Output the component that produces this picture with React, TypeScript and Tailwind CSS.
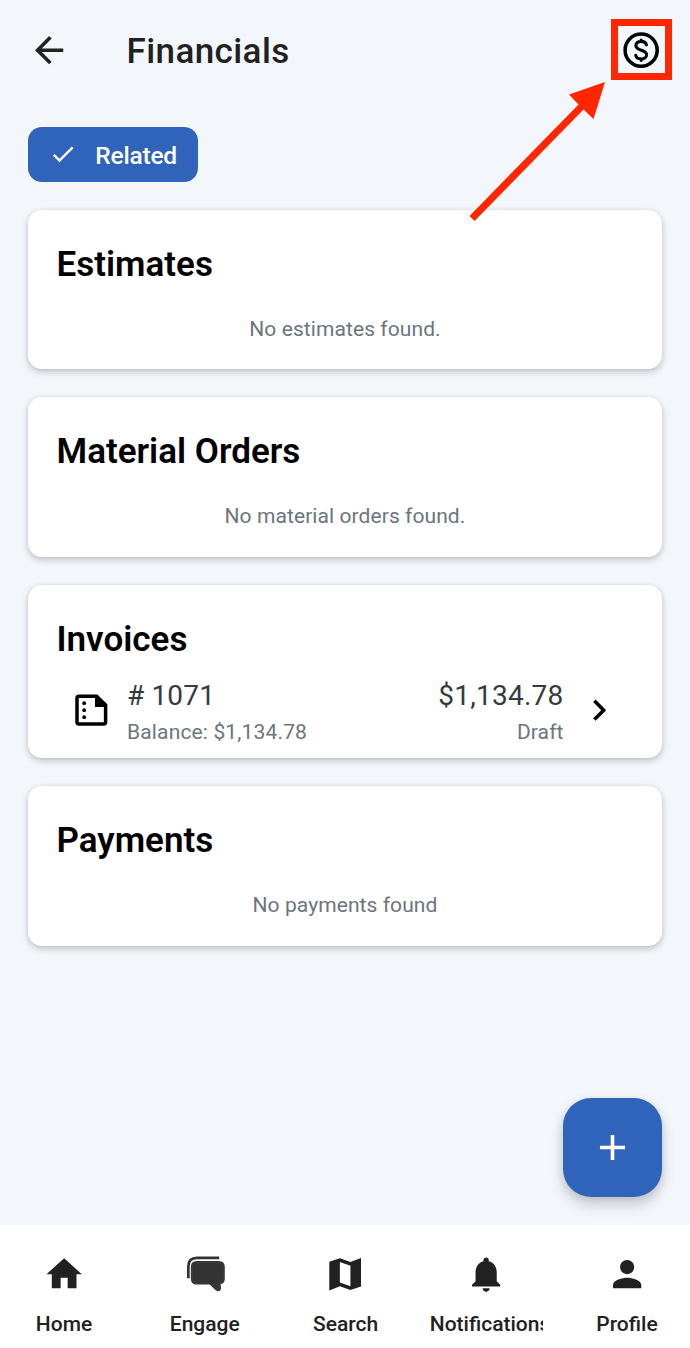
import React from 'react';

const ICON = {
  back: 'M20 11H7.83l5.59-5.59L12 4l-8 8 8 8 1.41-1.41L7.83 13H20v-2z',
  home: 'M10 20v-6h4v6h5v-8h3L12 3 2 12h3v8z',
  map: 'M15 5.1L9 3 3 5.02v16.2l6-2.33 6 2.1 6-2.02V2.77L15 5.1zm0 13.79l-6-2.11V5.11l6 2.11v11.67z',
  bell: 'M12 22c1.1 0 2-.9 2-2h-4c0 1.1.9 2 2 2zm6-6v-5c0-3.07-1.63-5.64-4.5-6.32V4c0-.83-.67-1.5-1.5-1.5s-1.5.67-1.5 1.5v.68C7.64 5.36 6 7.92 6 11v5l-2 2v1h16v-1l-2-2z',
  person: 'M12 12c2.21 0 4-1.79 4-4s-1.79-4-4-4-4 1.79-4 4 1.79 4 4 4zm0 2c-2.67 0-8 1.34-8 4v2h16v-2c0-2.66-5.33-4-8-4z',
  check: 'M9 16.17L4.83 12l-1.42 1.41L9 19 21 7l-1.41-1.41z',
  chevron: 'M8.59 16.59L13.17 12 8.59 7.41 10 6l6 6-6 6-1.41-1.41z',
  plus: 'M19 13h-6v6h-2v-6H5v-2h6V5h2v6h6v2z',
};

const Icon: React.FC<{ d: string; className?: string }> = ({ d, className = 'size-[42.3px]' }) => (
  <svg viewBox="0 0 24 24" fill="currentColor" className={`block shrink-0 ${className}`}>
    <path d={d} />
  </svg>
);

const DollarIcon = () => (
  <svg viewBox="0 0 24 24" className="block size-[42.3px] shrink-0" fill="none" stroke="currentColor" strokeLinecap="round">
    <circle cx="12" cy="12" r="9.1" strokeWidth="2" />
    <path
      d="M15 9C14.7 7.7 13.5 7 12 7c-1.8 0-3 1-3 2.4 0 3.4 6.1 1.8 6.1 5.2 0 1.4-1.3 2.4-3.1 2.4-1.6 0-2.8-.8-3.1-2.1M12 6.2V7M12 17v.8"
      strokeWidth="1.75"
    />
  </svg>
);

const InvoiceIcon = () => (
  <svg viewBox="0 0 42 42" className="mb-[8px] block size-[42px] shrink-0">
    <path d="M9 7.2h17.6L35.6 16v17a2 2 0 0 1-2 2H9a2 2 0 0 1-2-2V9.2a2 2 0 0 1 2-2z" fill="none" stroke="#000" strokeWidth="3.5" />
    <path d="M25 6v12h12z" />
    <circle cx="14.2" cy="14.2" r="1.9" />
    <circle cx="14.2" cy="21.2" r="1.9" />
    <circle cx="14.2" cy="28.2" r="1.9" />
  </svg>
);

const EngageIcon = () => (
  <svg viewBox="0 0 42 42" className="block size-[42.3px]" fill="none">
    <path d="M4.3 25V13.5q0-8.7 8.7-8.7H35" stroke="#333" strokeWidth="2.7" />
    <path
      d="M12.5 7.9H34.5q6 0 6 6v11.6q0 4.6-4.2 5.5l.6 4.5q-1.8 4-5.4 1.6L25.5 31.3H12.5q-5.7 0-5.7-5.7V13.9q0-6 5.7-6z"
      fill="#333"
    />
    <path
      d="M12.8 9.6H34q4.8 0 4.8 4.8v10.4q0 4.3-4.6 4.9l1 4.8q-1.2 1.8-2.8.6L27 29.8H12.8q-4.4 0-4.4-4.4v-11q0-4.8 4.4-4.8z"
      stroke="#484848"
      strokeWidth="0.5"
    />
  </svg>
);

const Card: React.FC<{ title: string; className: string; children: React.ReactNode }> = ({ title, className, children }) => (
  <section className={`flex flex-col rounded-[14px] bg-white px-[28.5px] pt-[34.3px] shadow-[0_3px_7px_rgba(0,0,0,0.2),0_0_4px_rgba(0,0,0,0.07)] ${className}`}>
    <h2 className="text-[35px] leading-[42px] font-semibold text-black">{title}</h2>
    {children}
  </section>
);

const Empty: React.FC<{ text: string }> = ({ text }) => (
  <p className="mt-[30px] text-center text-[21px] leading-[26px] tracking-[0.08px] text-[#6c757d]">{text}</p>
);

const tabs = [
  { label: 'Home', icon: <Icon d={ICON.home} /> },
  { label: 'Engage', icon: <EngageIcon /> },
  { label: 'Search', icon: <Icon d={ICON.map} /> },
  { label: 'Notifications', icon: <Icon d={ICON.bell} /> },
  { label: 'Profile', icon: <Icon d={ICON.person} /> },
];

export default function App() {
  return (
    <div className="relative flex h-[1348px] w-[690px] flex-col overflow-hidden bg-[#f3f6fb] font-[Roboto,sans-serif]">
      <header className="flex h-[99.4px] shrink-0 items-center pr-[18px] pl-[27.8px] text-[#212121]">
        <Icon d={ICON.back} />
        <h1 className="ml-[56.5px] pt-[5.5px] text-[35px] leading-[42px] font-medium tracking-[0.4px]">Financials</h1>
        <div className="ml-auto flex size-[61.5px] items-center justify-center border-[7px] border-[#ff2600] text-black">
          <DollarIcon />
        </div>
      </header>

      <main className="flex flex-col px-7 pt-[27.5px]">
        <button className="flex h-[55px] w-[170px] items-center rounded-[14px] bg-[#2f64ba] pl-[21.3px] text-white">
          <Icon d={ICON.check} className="size-[28px]" />
          <span className="ml-[18px] pt-[3px] text-[24.5px] leading-[30px] font-medium tracking-[-0.2px]">Related</span>
        </button>

        <div className="mt-[27.7px] flex flex-col gap-7">
          <Card title="Estimates" className="h-[159.6px]">
            <Empty text="No estimates found." />
          </Card>
          <Card title="Material Orders" className="h-[159.6px]">
            <Empty text="No material orders found." />
          </Card>
          <Card title="Invoices" className="h-[173.2px]">
            <div className="flex items-center pt-[16.6px] pr-[13.7px] pl-[13.5px]">
              <InvoiceIcon />
              <div className="ml-[15px] flex flex-col">
                <span className="text-[28px] leading-[36px] tracking-[0.15px] text-[#343a40]"># 1071</span>
                <span className="text-[21px] leading-[36px] tracking-[0.15px] text-[#6c757d]">Balance: $1,134.78</span>
              </div>
              <div className="ml-auto flex flex-col items-end">
                <span className="text-[28px] leading-[36px] tracking-[0.25px] text-[#343a40]">$1,134.78</span>
                <span className="text-[21px] leading-[36px] tracking-[0.1px] text-[#6c757d]">Draft</span>
              </div>
              <Icon d={ICON.chevron} className="mb-[8px] ml-[14px] size-[42.3px] text-black" />
            </div>
          </Card>
          <Card title="Payments" className="h-[159.6px]">
            <Empty text="No payments found" />
          </Card>
        </div>
      </main>

      <button className="absolute top-[1098.3px] left-[563.4px] flex size-[98.4px] items-center justify-center rounded-[28px] bg-[#2f64ba] text-white shadow-[0_8px_14px_rgba(0,0,0,0.18),0_1px_8px_rgba(0,0,0,0.09)]">
        <Icon d={ICON.plus} className="size-[43px]" />
      </button>

      <nav className="relative mt-auto flex h-[123.5px] shrink-0 justify-between bg-white pr-[6.5px] pl-[7.5px] text-[#212121]">
        {tabs.map((tab) => (
          <div key={tab.label} className="flex w-[113px] flex-col items-center pt-[28.5px]">
            {tab.icon}
            <span className="mt-[15px] max-w-full overflow-hidden text-[21px] leading-[28px] font-medium whitespace-nowrap">
              {tab.label}
            </span>
          </div>
        ))}
      </nav>

      {/* pointer arrow towards the dollar button */}
      <svg viewBox="0 0 144 144" className="pointer-events-none absolute top-[80px] left-[468px] size-[144px]" fill="#ff2600">
        <path d="M137 2L101 14.5l9.5 10L1.5 136l5 5L115.5 29.5l10 9.5z" />
      </svg>
    </div>
  );
}
